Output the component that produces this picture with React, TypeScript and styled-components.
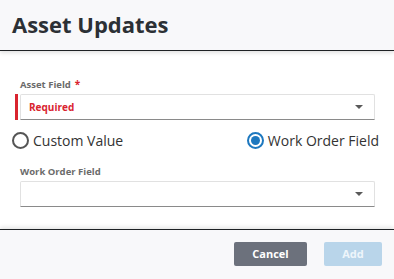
import React from "react";
import styled, { createGlobalStyle } from "styled-components";

const Global = createGlobalStyle`
  html, body { margin: 0; padding: 0; background: #ffffff; }
  body { font-family: "Open Sans", "Noto Sans", sans-serif; }
  * { box-sizing: border-box; }
`;

const Dialog = styled.div`
  width: 394px;
  height: 279px;
  display: flex;
  flex-direction: column;
  background: #ffffff;
  overflow: hidden;
`;

const Header = styled.header`
  height: 51px;
  flex: none;
  background: #f8f8fa;
  border-bottom: 1px solid #1e2124;
  box-shadow: 0 2px 4px rgba(0, 0, 0, 0.12);
  display: flex;
  align-items: center;
  padding: 0 12px 2px;
  position: relative;
  z-index: 1;
`;

const Title = styled.h1`
  margin: 0;
  font-size: 22px;
  font-weight: 700;
  color: #2c3035;
  letter-spacing: 0;
`;

const Body = styled.main`
  flex: 1;
  padding: 27px 19px 0 20px;
  display: flex;
  flex-direction: column;
`;

const Label = styled.label`
  display: block;
  font-size: 9.5px;
  font-weight: 700;
  color: #6b6b6b;
  line-height: 13px;
  margin-bottom: 3px;
`;

const Star = styled.span`
  color: #d9242f;
  margin-left: 4px;
  font-size: 10px;
`;

const Select = styled.div<{ $invalid?: boolean }>`
  position: relative;
  height: 26px;
  background: #fff;
  border: 1px solid #e1e1e1;
  border-bottom: 1px solid #8a8a8a;
  border-radius: 2px 2px 0 0;
  display: flex;
  align-items: center;
  padding: 0 8px;
  font-size: 10px;
  font-weight: 700;
  color: #d9242f;
  ${(p) =>
    p.$invalid &&
    `
    &::before {
      content: "";
      position: absolute;
      left: -6px;
      top: -1px;
      bottom: -1px;
      width: 3px;
      background: #d9242f;
    }
  `}
`;

const Caret = styled.span`
  position: absolute;
  right: 11px;
  top: 50%;
  margin-top: -2px;
  width: 0;
  height: 0;
  border-left: 4px solid transparent;
  border-right: 4px solid transparent;
  border-top: 4px solid #5a5a5a;
`;

const RadioRow = styled.div`
  display: flex;
  justify-content: space-between;
  align-items: center;
  margin: 10px -4px 0 -8px;
  height: 20px;
`;

const RadioOption = styled.div`
  display: flex;
  align-items: center;
  gap: 4px;
  font-size: 14px;
  color: #333333;
`;

const RadioCircle = styled.span<{ $checked?: boolean }>`
  width: 17px;
  height: 17px;
  border-radius: 50%;
  border: 2px solid ${(p) => (p.$checked ? "#1d78bf" : "#555555")};
  display: inline-flex;
  align-items: center;
  justify-content: center;
  &::after {
    content: "";
    width: 9px;
    height: 9px;
    border-radius: 50%;
    background: ${(p) => (p.$checked ? "#1d78bf" : "transparent")};
  }
`;

const FieldGroup = styled.div<{ $top?: number }>`
  margin-top: ${(p) => p.$top ?? 0}px;
`;

const Footer = styled.footer`
  height: 50px;
  flex: none;
  background: #f8f8fa;
  border-top: 1px solid #1e2124;
  box-shadow: 0 -2px 4px rgba(0, 0, 0, 0.1);
  display: flex;
  justify-content: flex-end;
  align-items: center;
  gap: 17px;
  padding: 0 12px 2px 0;
`;

const Button = styled.button<{ $variant: "secondary" | "primary" }>`
  height: 24px;
  border: none;
  border-radius: 2px;
  font-family: inherit;
  font-size: 11px;
  font-weight: 700;
  color: ${(p) => (p.$variant === "secondary" ? "#ffffff" : "#eef5fb")};
  background: ${(p) => (p.$variant === "secondary" ? "#6c717c" : "#b9d5ea")};
  width: ${(p) => (p.$variant === "secondary" ? "73px" : "58px")};
  padding: 0;
`;

export default function App() {
  return (
    <>
      <Global />
      <Dialog>
        <Header>
          <Title>Asset Updates</Title>
        </Header>
        <Body>
          <FieldGroup>
            <Label>
              Asset Field<Star>*</Star>
            </Label>
            <Select $invalid>
              Required
              <Caret />
            </Select>
          </FieldGroup>
          <RadioRow>
            <RadioOption>
              <RadioCircle />
              Custom Value
            </RadioOption>
            <RadioOption>
              <RadioCircle $checked />
              Work Order Field
            </RadioOption>
          </RadioRow>
          <FieldGroup $top={15}>
            <Label>Work Order Field</Label>
            <Select>
              <Caret />
            </Select>
          </FieldGroup>
        </Body>
        <Footer>
          <Button $variant="secondary">Cancel</Button>
          <Button $variant="primary">Add</Button>
        </Footer>
      </Dialog>
    </>
  );
}
